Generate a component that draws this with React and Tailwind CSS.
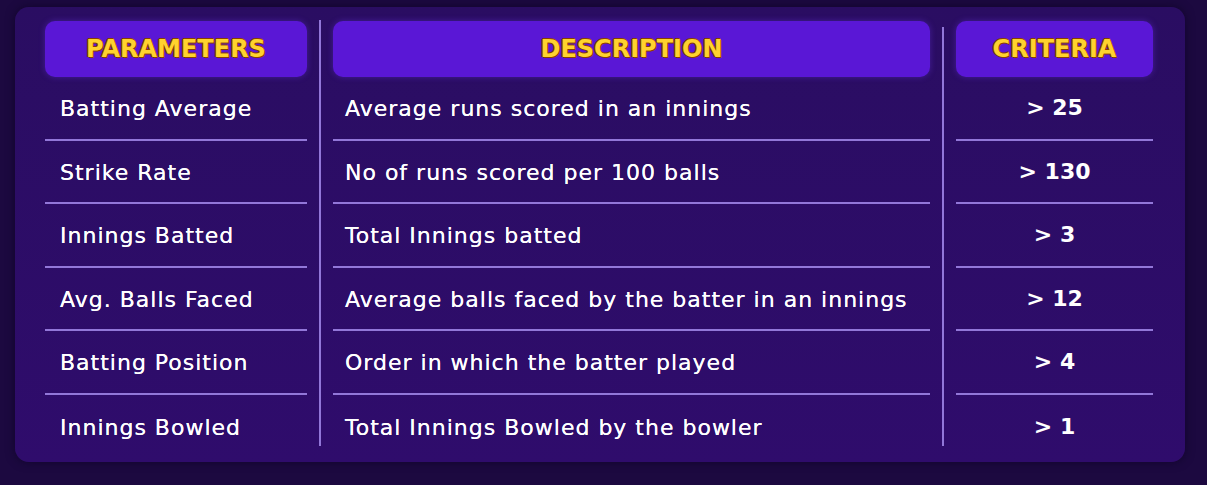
const rows = [
  ["Batting Average", "Average runs scored in an innings", "> 25"],
  ["Strike Rate", "No of runs scored per 100 balls", "> 130"],
  ["Innings Batted", "Total Innings batted", "> 3"],
  ["Avg. Balls Faced", "Average balls faced by the batter in an innings", "> 12"],
  ["Batting Position", "Order in which the batter played", "> 4"],
  ["Innings Bowled", "Total Innings Bowled by the bowler", "> 1"],
];

const headText =
  "text-[24px] font-bold text-[#ffd22e] [text-shadow:0_0_1px_#7a3500,1px_1px_0_#8a4200,-1px_0_0_#8a4200,0_-1px_0_#8a4200]";

function Column({ title, items, className, textClass, align }) {
  return (
    <div className={`flex flex-col ${className}`}>
      <div className="h-[56px] rounded-[10px] bg-[#5a17d6] flex items-center justify-center shadow-[0_0_6px_rgba(120,60,255,0.35)]">
        <span className={headText}>{title}</span>
      </div>
      {items.map((t, i) => (
        <div
          key={i}
          className={`h-[63.5px] flex items-center ${align} ${
            i < items.length - 1 ? "border-b-2 border-[#9277d9]" : ""
          }`}
        >
          <span className={textClass}>{t}</span>
        </div>
      ))}
    </div>
  );
}

export default function App() {
  return (
    <div
      className="w-[1207px] h-[485px] bg-[#1c0940] pt-[7px] pl-[15px] overflow-hidden"
      style={{ fontFamily: "'DejaVu Sans', 'Open Sans', sans-serif" }}
    >
      <div className="w-[1170px] h-[455px] rounded-[14px] bg-gradient-to-b from-[#2a0d62] to-[#2f0c6c] shadow-[0_0_10px_rgba(10,0,30,0.6)] pl-[30px] pt-[14px] flex">
        <Column
          title="PARAMETERS"
          items={rows.map((r) => r[0])}
          className="w-[262px]"
          align="pl-[15px] pt-[2px]"
          textClass="text-[22px] tracking-[1px] text-white [text-shadow:0_0_0.4px_#ffffff]"
        />
        <div className="w-[2px] bg-[#9277d9] ml-[12px] mr-[12px] mb-[16px] mt-[-1px]" />
        <Column
          title="DESCRIPTION"
          items={rows.map((r) => r[1])}
          className="w-[597px]"
          align="pl-[12px] pt-[2px]"
          textClass="text-[22px] tracking-[1px] text-white [text-shadow:0_0_0.4px_#ffffff]"
        />
        <div className="w-[2px] bg-[#9277d9] ml-[12px] mr-[12px] mb-[16px] mt-[6px]" />
        <Column
          title="CRITERIA"
          items={rows.map((r) => r[2])}
          className="w-[197px]"
          align="justify-center"
          textClass="text-[22px] font-bold text-white"
        />
      </div>
    </div>
  );
}
